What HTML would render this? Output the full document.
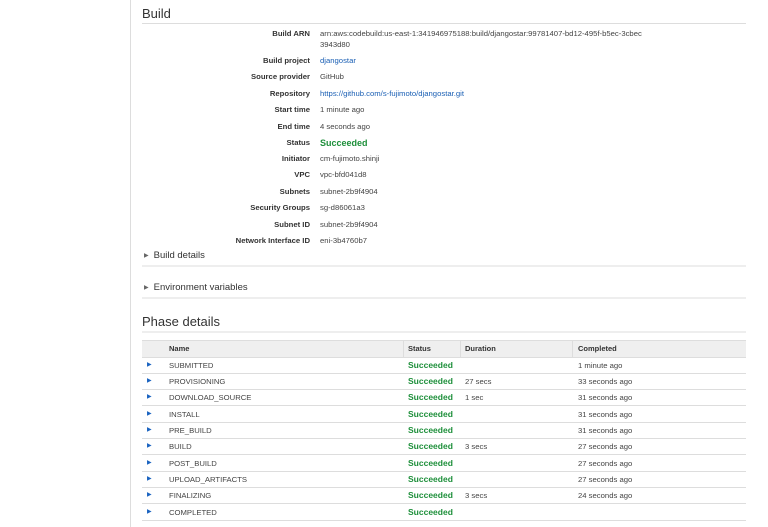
<!DOCTYPE html>
<html><head><style>
body{margin:0;width:768px;height:527px;background:#fff;font-family:"Liberation Sans",sans-serif;color:#444;position:relative;overflow:hidden}
.vl{position:absolute;left:130px;top:0;width:1px;height:527px;background:#ddd}
.h{position:absolute;left:142px;font-size:13px;color:#333}
.hl{position:absolute;left:142px;width:604px;height:1px;background:#ddd}
.row{position:absolute;left:142px;font-size:7.7px;height:10px;line-height:10px}
.row b{position:absolute;left:0;width:168px;text-align:right;color:#333}
.row span{position:absolute;left:178px;white-space:nowrap}
a{color:#1a5fb4;text-decoration:none}
.exp{position:absolute;left:144px;font-size:9.5px;color:#333}
.exp i{font-style:normal;font-size:6px;color:#666;margin-right:5px;vertical-align:1px}
.th{position:absolute;left:142px;top:340px;width:604px;height:16px;background:#efefef;border-top:1px solid #ddd;border-bottom:1px solid #ddd;font-size:7.5px;font-weight:bold;color:#333}
.tr{position:absolute;left:142px;width:604px;height:16px;border-bottom:1px solid #ddd;font-size:7.7px;line-height:17px}
.c{position:absolute;top:0;white-space:nowrap}
.g{color:#1d8f3a;font-weight:bold;font-size:8.5px}
.ar{color:#1a63c0;font-size:6px;left:5px}
.sep{position:absolute;top:0;width:1px;height:16px;background:#ddd}
</style></head><body>
<div class="vl"></div>
<div class="h" style="top:6px">Build</div>
<div class="hl" style="top:23px"></div>
<div class="row" style="top:29px"><b>Build ARN</b><span>arn:aws:codebuild:us-east-1:341946975188:build/djangostar:99781407-bd12-495f-b5ec-3cbec</span></div>
<div class="row" style="top:40px"><span>3943d80</span></div>
<div class="row" style="top:56px"><b>Build project</b><span><a>djangostar</a></span></div>
<div class="row" style="top:72px"><b>Source provider</b><span>GitHub</span></div>
<div class="row" style="top:89px"><b>Repository</b><span><a>https://github.com/s-fujimoto/djangostar.git</a></span></div>
<div class="row" style="top:105px"><b>Start time</b><span>1 minute ago</span></div>
<div class="row" style="top:122px"><b>End time</b><span>4 seconds ago</span></div>
<div class="row" style="top:138px"><b>Status</b><span class="g" style="font-size:9px">Succeeded</span></div>
<div class="row" style="top:154px"><b>Initiator</b><span>cm-fujimoto.shinji</span></div>
<div class="row" style="top:170px"><b>VPC</b><span>vpc-bfd041d8</span></div>
<div class="row" style="top:187px"><b>Subnets</b><span>subnet-2b9f4904</span></div>
<div class="row" style="top:203px"><b>Security Groups</b><span>sg-d86061a3</span></div>
<div class="row" style="top:220px"><b>Subnet ID</b><span>subnet-2b9f4904</span></div>
<div class="row" style="top:236px"><b>Network Interface ID</b><span>eni-3b4760b7</span></div>
<div class="exp" style="top:250px"><i>▶</i>Build details</div>
<div class="hl" style="top:265px;height:2px;background:#eee"></div>
<div class="exp" style="top:282px"><i>▶</i>Environment variables</div>
<div class="hl" style="top:297px;height:2px;background:#eee"></div>
<div class="h" style="top:314px">Phase details</div>
<div class="hl" style="top:331px;height:2px;background:#eee"></div>
<div class="th">
<div class="sep" style="left:261px"></div><div class="sep" style="left:318px"></div><div class="sep" style="left:430px"></div>
<span class="c" style="left:27px;line-height:16px">Name</span><span class="c" style="left:266px;line-height:16px">Status</span><span class="c" style="left:323px;line-height:16px">Duration</span><span class="c" style="left:436px;line-height:16px">Completed</span></div>
<div class="tr" style="top:357px"><span class="c ar">▶</span><span class="c" style="left:27px">SUBMITTED</span><span class="c g" style="left:266px">Succeeded</span><span class="c" style="left:436px">1 minute ago</span></div>
<div class="tr" style="top:373px"><span class="c ar">▶</span><span class="c" style="left:27px">PROVISIONING</span><span class="c g" style="left:266px">Succeeded</span><span class="c" style="left:323px">27 secs</span><span class="c" style="left:436px">33 seconds ago</span></div>
<div class="tr" style="top:389px"><span class="c ar">▶</span><span class="c" style="left:27px">DOWNLOAD_SOURCE</span><span class="c g" style="left:266px">Succeeded</span><span class="c" style="left:323px">1 sec</span><span class="c" style="left:436px">31 seconds ago</span></div>
<div class="tr" style="top:406px"><span class="c ar">▶</span><span class="c" style="left:27px">INSTALL</span><span class="c g" style="left:266px">Succeeded</span><span class="c" style="left:436px">31 seconds ago</span></div>
<div class="tr" style="top:422px"><span class="c ar">▶</span><span class="c" style="left:27px">PRE_BUILD</span><span class="c g" style="left:266px">Succeeded</span><span class="c" style="left:436px">31 seconds ago</span></div>
<div class="tr" style="top:438px"><span class="c ar">▶</span><span class="c" style="left:27px">BUILD</span><span class="c g" style="left:266px">Succeeded</span><span class="c" style="left:323px">3 secs</span><span class="c" style="left:436px">27 seconds ago</span></div>
<div class="tr" style="top:455px"><span class="c ar">▶</span><span class="c" style="left:27px">POST_BUILD</span><span class="c g" style="left:266px">Succeeded</span><span class="c" style="left:436px">27 seconds ago</span></div>
<div class="tr" style="top:471px"><span class="c ar">▶</span><span class="c" style="left:27px">UPLOAD_ARTIFACTS</span><span class="c g" style="left:266px">Succeeded</span><span class="c" style="left:436px">27 seconds ago</span></div>
<div class="tr" style="top:487px"><span class="c ar">▶</span><span class="c" style="left:27px">FINALIZING</span><span class="c g" style="left:266px">Succeeded</span><span class="c" style="left:323px">3 secs</span><span class="c" style="left:436px">24 seconds ago</span></div>
<div class="tr" style="top:504px"><span class="c ar">▶</span><span class="c" style="left:27px">COMPLETED</span><span class="c g" style="left:266px">Succeeded</span></div>
</body></html>
